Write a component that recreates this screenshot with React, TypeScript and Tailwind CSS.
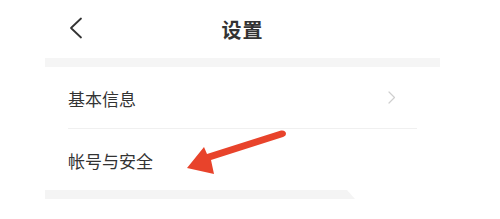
// Settings page - account menu with annotation arrow

const font = { fontFamily: '"Noto Sans CJK SC", "Noto Sans", sans-serif' };

function BackIcon() {
  return (
    <svg width="14" height="22" viewBox="0 0 14 22" fill="none">
      <path d="M12 1.5 L2 11 L12 20.5" stroke="#333" strokeWidth="1.8" strokeLinecap="round" strokeLinejoin="round" />
    </svg>
  );
}

function ChevronRight() {
  return (
    <svg width="8" height="13" viewBox="0 0 8 13" fill="none">
      <path d="M1 1 L6.5 6.5 L1 12" stroke="#cfcfcf" strokeWidth="1.2" strokeLinecap="round" strokeLinejoin="round" />
    </svg>
  );
}

export default function App() {
  return (
    <div className="relative w-[500px] h-[219px] bg-white overflow-hidden" style={font}>
      <div className="ml-[45px] w-[395px]">
        {/* Header */}
        <header className="relative h-[58px] flex items-center justify-center">
          <button className="absolute left-[24px] top-[17px]">
            <BackIcon />
          </button>
          <h1 className="text-[20px] font-bold text-[#333] tracking-[1px] pt-[1px]">设置</h1>
        </header>

        <div className="h-[9px] bg-[#f5f5f5]" />

        {/* Menu */}
        <div className="px-[23px]">
          <div className="h-[62px] flex items-center justify-between border-b border-[#f0f0f0] pr-[21px]">
            <span className="text-[17px] text-[#333] pt-[2px]">基本信息</span>
            <ChevronRight />
          </div>
          <div className="h-[61px] flex items-center">
            <span className="text-[17px] text-[#333] pt-[2px]">帐号与安全</span>
          </div>
        </div>

        <div
          className="h-[9px] w-[310px] bg-[#f4f4f4]"
          style={{ clipPath: 'polygon(0 0, 302px 0, 310px 100%, 0 100%)' }}
        />
      </div>

      {/* Annotation arrow */}
      <svg className="absolute left-0 top-0 pointer-events-none" width="500" height="219" viewBox="0 0 500 219">
        <path
          d="M281 130.5 Q286 130 286 134 Q286 136 283 137 L211 160 L214 174 L187 168 L204 147 L207 154 Z"
          fill="#e8432b"
        />
      </svg>
    </div>
  );
}
